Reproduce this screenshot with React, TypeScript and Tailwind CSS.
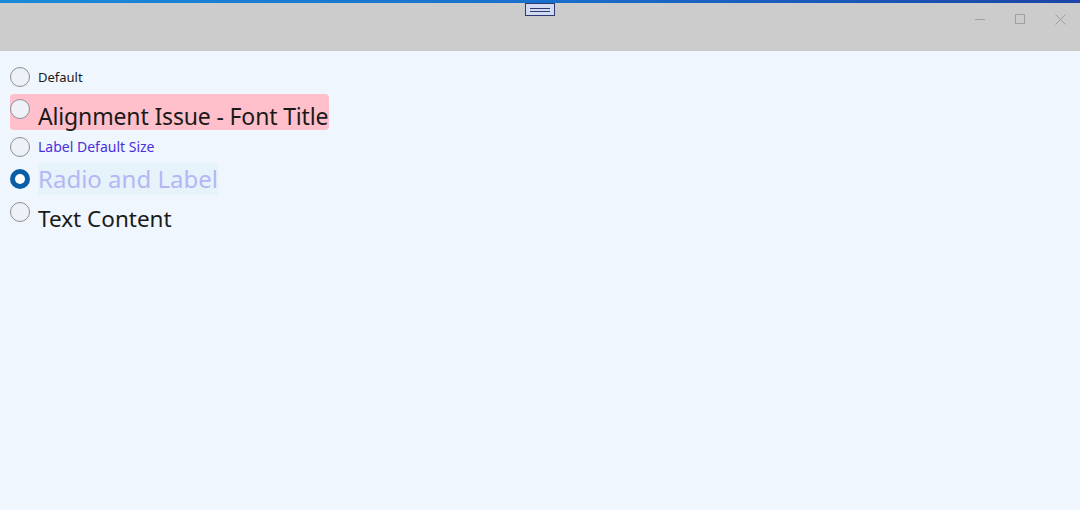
import React from "react";

function Radio({ checked = false }: { checked?: boolean }) {
  if (checked) {
    return (
      <span className="flex h-5 w-5 shrink-0 items-center justify-center rounded-full bg-[#0a5ea6]">
        <span className="h-[10px] w-[10px] rounded-full bg-white" />
      </span>
    );
  }
  return <span className="block h-5 w-5 shrink-0 rounded-full border border-[#8b8f96] bg-[#eef2f7]" />;
}

export default function App() {
  return (
    <div
      className="flex h-[510px] w-[1080px] flex-col overflow-hidden bg-[#eff6fe]"
      style={{ fontFamily: '"Noto Sans", "Open Sans", sans-serif' }}
    >
      {/* Title bar */}
      <div className="h-[3px] bg-gradient-to-r from-[#1a8ad8] via-[#1a6fcc] to-[#1b45a8]" />
      <div className="relative flex h-[48px] items-start bg-[#cccccc]">
        <div className="absolute left-[525px] top-0 flex h-[13px] w-[30px] flex-col items-center justify-center gap-[2px] border border-[#2e3a72] bg-[#d2daf2]">
          <span className="h-px w-[20px] bg-[#2e3a72]" />
          <span className="h-px w-[20px] bg-[#2e3a72]" />
        </div>
        <div className="ml-auto flex items-center pt-[6px]">
          <div className="flex h-[20px] w-[40px] items-center justify-center">
            <span className="h-px w-[10px] bg-[#a0a0a0]" />
          </div>
          <div className="flex h-[20px] w-[40px] items-center justify-center">
            <span className="h-[10px] w-[10px] border border-[#a0a0a0]" />
          </div>
          <div className="flex h-[20px] w-[40px] items-center justify-center">
            <svg width="11" height="11" viewBox="0 0 11 11" fill="none" stroke="#a0a0a0" strokeWidth="1">
              <path d="M0.5 0.5 L10.5 10.5 M10.5 0.5 L0.5 10.5" />
            </svg>
          </div>
        </div>
      </div>

      {/* Radio list */}
      <div className="flex flex-col items-start pl-[10px] pt-[16px]">
        <div className="flex h-5 items-center gap-2">
          <Radio />
          <span className="text-[13px] leading-none text-[#1a1a1a]">Default</span>
        </div>

        <div className="mt-[7px] flex h-[36px] items-start gap-2 rounded-[4px] bg-[#ffc0cb] pr-[1px]">
          <span className="mt-[5px]">
            <Radio />
          </span>
          <span className="mt-[8px] text-[23px] leading-[28px] tracking-[-0.15px] text-[#1a1a1a]">
            Alignment Issue - Font Title
          </span>
        </div>

        <div className="mt-[7px] flex h-5 items-center gap-2">
          <Radio />
          <span className="text-[14px] leading-none text-[#4b2fe0]">Label Default Size</span>
        </div>

        <div className="mt-[6px] flex h-[32px] items-center gap-2">
          <Radio checked />
          <span className="bg-[#e6f3fb] text-[24px] leading-[32px] text-[#b4b7f4]">Radio and Label</span>
        </div>

        <div className="mt-[7px] flex items-start gap-2">
          <Radio />
          <span className="mt-[3px] text-[22.5px] leading-[28px] text-[#1a1a1a]">Text Content</span>
        </div>
      </div>
    </div>
  );
}
